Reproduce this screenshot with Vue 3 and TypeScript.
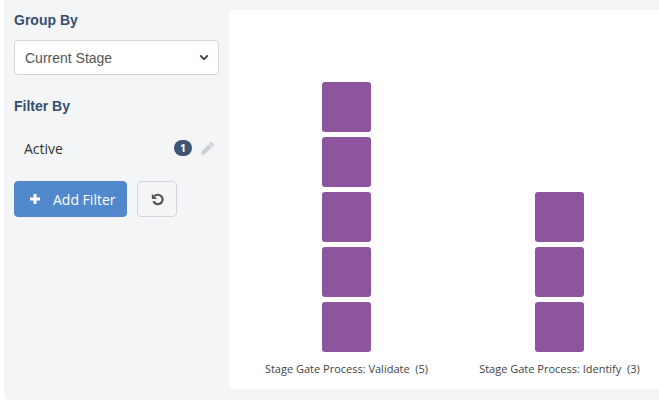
<script setup lang="ts">
interface Column { name: string; count: number }
const columns: Column[] = [
  { name: 'Stage Gate Process: Validate', count: 5 },
  { name: 'Stage Gate Process: Identify', count: 3 },
]
</script>

<template>
  <div class="page">
    <aside class="side">
      <h3 class="heading">Group By</h3>
      <div class="select">
        <span>Current Stage</span>
        <svg class="chev" width="10" height="7" viewBox="0 0 10 7"><path d="M1.2 1.4 5 5.2l3.800-3.800" fill="none" stroke="#444" stroke-width="2"/></svg>
      </div>
      <h3 class="heading filter-heading">Filter By</h3>
      <div class="filter-row">
        <span class="filter-name">Active</span>
        <span class="badge">1</span>
        <svg class="pencil" width="13" height="13" viewBox="0 0 512 512"><path fill="#cfd1d4" d="M497.900 142.100 452 188c-4.700 4.700-12.300 4.700-17 0L324 77c-4.700-4.700-4.700-12.300 0-17l45.900-45.900c18.700-18.700 49.100-18.700 67.900 0l60.100 60.100c18.800 18.700 18.800 49.100 0 67.900zM285.100 99 24 360 3.400 478.100c-2.800 16 11.100 29.900 27.100 27.100L148.600 484l261-261c4.700-4.700 4.700-12.300 0-17L302.100 99c-4.800-4.700-12.400-4.700-17 0z"/></svg>
      </div>
      <div class="actions">
        <button class="add" type="button">
          <svg width="12" height="12" viewBox="0 0 12 12"><path d="M6 1v10M1 6h10" stroke="#fff" stroke-width="3"/></svg>
          <span>Add Filter</span>
        </button>
        <button class="reset" type="button" aria-label="Reset">
          <svg width="13" height="13" viewBox="0 0 16 16"><path d="M4 4.200A5.800 5.800 0 1 1 3 10" fill="none" stroke="#555" stroke-width="2.700"/><path d="M1 1v6.400h6.400z" fill="#555"/></svg>
        </button>
      </div>
    </aside>
    <main class="chart">
      <div v-for="c in columns" :key="c.name" class="col">
        <div class="stack">
          <div v-for="n in c.count" :key="n" class="cell"></div>
        </div>
        <div class="label">{{ c.name }}&nbsp; ({{ c.count }})</div>
      </div>
    </main>
  </div>
</template>

<style scoped>
.page {
  box-sizing: border-box;
  width: 655px;
  height: 400px;
  margin-left: 4px;
  padding: 10px 0 10px 10px;
  display: flex;
  background: #f4f5f7;
  border-radius: 0 0 0 6px;
  overflow: hidden;
}
.side {
  width: 205px;
  margin-right: 10px;
  flex: none;
  display: flex;
  flex-direction: column;
}
.heading {
  margin: 0;
  font: 700 14px/20px "Liberation Sans", Arial, sans-serif;
  color: #344f70;
}
.select {
  box-sizing: border-box;
  height: 35px;
  margin-top: 10px;
  padding: 0 9px 0 10px;
  display: flex;
  align-items: center;
  justify-content: space-between;
  background: #fff;
  border: 1px solid #d2d5d8;
  border-radius: 4px;
  font: 14px "Liberation Sans", Arial, sans-serif;
  color: #555;
}
.filter-heading { margin-top: 21px; }
.filter-row {
  display: flex;
  align-items: center;
  height: 20px;
  margin-top: 22px;
  padding: 0 5px 0 10px;
  font: 14px "Open Sans", sans-serif;
  color: #333;
}
.filter-name { flex: 1; }
.badge {
  width: 18px;
  height: 16px;
  margin-right: 9px;
  border-radius: 8px;
  background: #3f5571;
  color: #fff;
  font: 700 10.5px/16px "Open Sans", sans-serif;
  text-align: center;
}
.actions {
  display: flex;
  gap: 10px;
  margin-top: 23px;
}
.add {
  box-sizing: border-box;
  width: 113px;
  height: 36px;
  padding: 0 0 0 14px;
  display: flex;
  align-items: center;
  gap: 12px;
  background: #5289cc;
  border: 1px solid #4f86c8;
  border-radius: 4px;
  color: #fff;
  font: 14px "Open Sans", sans-serif;
}
.reset {
  box-sizing: border-box;
  width: 40px;
  height: 36px;
  padding: 0;
  display: flex;
  align-items: center;
  justify-content: center;
  background: #f4f5f7;
  border: 1px solid #d2d4d7;
  border-radius: 4px;
}
.chart {
  flex: 1;
  display: flex;
  height: 379px;
  padding-left: 11px;
  background: #fff;
  border-radius: 5px 0 0 5px;
}
.col {
  width: 213px;
  flex: none;
  display: flex;
  flex-direction: column;
  align-items: center;
  justify-content: flex-end;
}
.stack {
  display: flex;
  flex-direction: column;
  gap: 5px;
}
.cell {
  width: 49.5px;
  height: 50px;
  background: #8e559f;
  border-radius: 3px;
}
.label {
  height: 37px;
  font: 11px/34px "Open Sans", sans-serif;
  color: #444;
  white-space: nowrap;
}
</style>
